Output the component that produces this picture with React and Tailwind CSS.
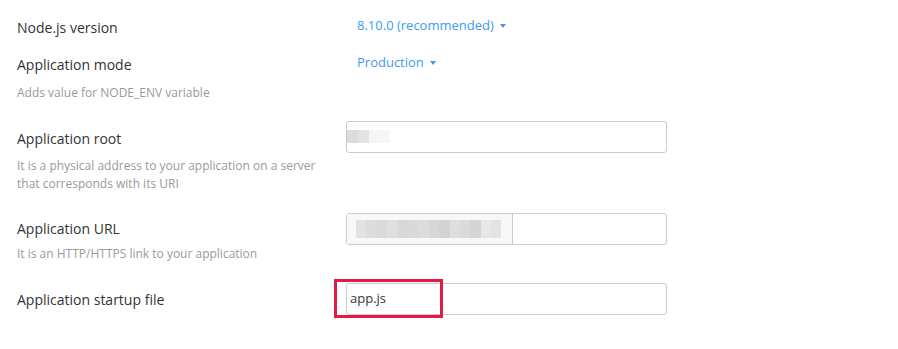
import React from "react";

const font = { fontFamily: '"Open Sans", "Liberation Sans", sans-serif' };

function Caret() {
  return (
    <span className="ml-[6px] inline-block w-0 h-0 border-x-[3px] border-x-transparent border-t-[4px] border-t-[#3d9bf0] translate-y-[1px]" />
  );
}

function Dropdown({ children }) {
  return (
    <div className="flex items-center pl-[11px] text-[13px] leading-[20px] text-[#3d9bf0]">
      <span>{children}</span>
      <Caret />
    </div>
  );
}

const blurA = ["#e3e2e0", "#dcdcdd", "#dadada", "#e0dfde", "#d7d8da", "#d9d9db", "#dedcda", "#d6d7d9", "#d2d3d4", "#dddede", "#dbdadb", "#d6d4d5", "#e6e7e9", "#e3e3e3"];

export default function App() {
  return (
    <div className="w-[898px] h-[349px] bg-white pl-[17px] pt-[15px] text-[#333333]" style={font}>
      {/* Row 1 */}
      <div className="flex items-start">
        <div className="w-[329px] pt-[3px] text-[14px] leading-[20px]">Node.js version</div>
        <Dropdown>8.10.0 (recommended)</Dropdown>
      </div>

      {/* Row 2 */}
      <div className="flex items-start mt-[14px]">
        <div className="w-[329px] pt-[3px]">
          <div className="text-[14px] leading-[20px]">Application mode</div>
          <div className="mt-[9px] text-[12px] leading-[18px] text-[#9a9a9a]">Adds value for NODE_ENV variable</div>
        </div>
        <Dropdown>Production</Dropdown>
      </div>

      {/* Row 3 */}
      <div className="flex items-start mt-[19px]">
        <div className="w-[329px] pt-[8px]">
          <div className="text-[14px] leading-[20px]">Application root</div>
          <div className="mt-[8px] text-[12px] leading-[18px] text-[#9a9a9a]">
            It is a physical address to your application on a server
            <br />
            that corresponds with its URI
          </div>
        </div>
        <div className="w-[321px] h-[32px] rounded-[3px] border border-[#cccccc] bg-white flex items-center">
          <div className="flex h-[13px] mt-[-1px]">
            <div className="w-[11px] bg-[#dcdcdc]" />
            <div className="w-[11px] bg-[#e3e3e3]" />
            <div className="w-[21px] bg-[#f6f6f6]" />
          </div>
        </div>
      </div>

      {/* Row 4 */}
      <div className="flex items-start mt-[20px]">
        <div className="w-[329px] pt-[6px]">
          <div className="text-[14px] leading-[20px]">Application URL</div>
          <div className="mt-[6px] text-[12px] leading-[18px] text-[#9a9a9a]">It is an HTTP/HTTPS link to your application</div>
        </div>
        <div className="w-[321px] h-[32px] rounded-[3px] border border-[#cccccc] bg-white flex overflow-hidden">
          <div className="w-[166px] h-full bg-[#f8f8f8] border-r border-[#cccccc] flex items-center pl-[9px]">
            <div className="flex h-[18px]">
              {blurA.map((c, i) => (
                <div key={i} className="w-[10.4px] h-full" style={{ backgroundColor: c }} />
              ))}
            </div>
          </div>
          <div className="flex-1" />
        </div>
      </div>

      {/* Row 5 */}
      <div className="flex items-start mt-[20px]">
        <div className="w-[329px] pt-[7px]">
          <div className="text-[14px] leading-[20px]">Application startup file</div>
        </div>
        <div className="relative w-[321px] h-[32px] rounded-[3px] border border-[#cccccc] bg-white flex items-center pl-[3px] text-[13px] text-[#333333]">
          app.js
          <div className="absolute left-[-13px] top-[-5px] w-[109px] h-[39px] border-[3px] border-[#e31b44]" />
        </div>
      </div>
    </div>
  );
}
